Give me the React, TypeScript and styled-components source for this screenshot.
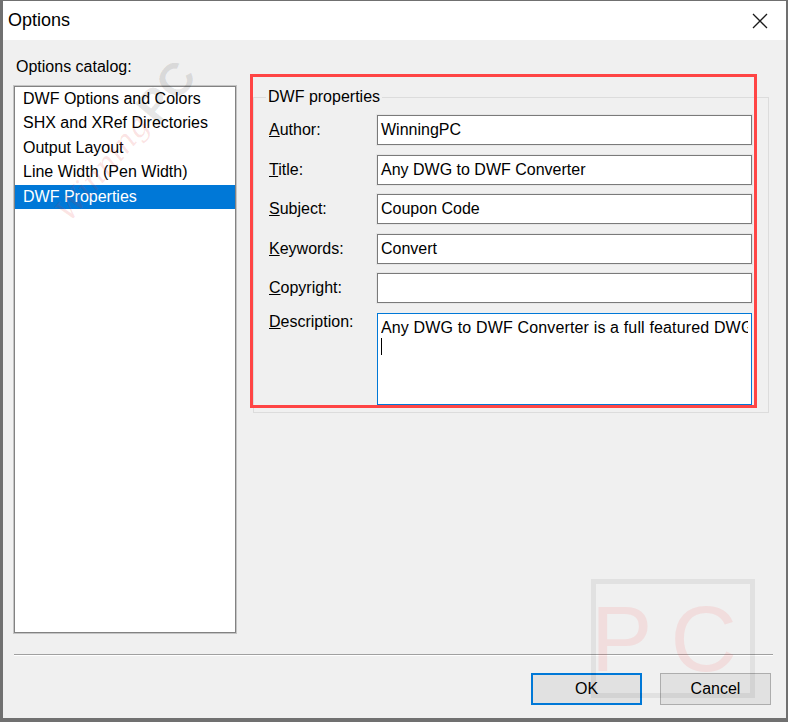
import styled, { createGlobalStyle } from 'styled-components';

const GlobalStyle = createGlobalStyle`
  html, body {
    margin: 0;
    padding: 0;
    background: #ffffff;
  }
  * {
    box-sizing: border-box;
  }
`;

const CATALOG_ITEMS = [
  'DWF Options and Colors',
  'SHX and XRef Directories',
  'Output Layout',
  'Line Width (Pen Width)',
  'DWF Properties',
];

const FIELDS = [
  { key: 'A', rest: 'uthor:', value: 'WinningPC' },
  { key: 'T', rest: 'itle:', value: 'Any DWG to DWF Converter' },
  { key: 'S', rest: 'ubject:', value: 'Coupon Code' },
  { key: 'K', rest: 'eywords:', value: 'Convert' },
  { key: 'C', rest: 'opyright:', value: '' },
];

const CloseIcon = () => (
  <svg width="16" height="16" viewBox="0 0 16 16" aria-hidden="true">
    <path d="M1 1 L15 15 M15 1 L1 15" stroke="#1a1a1a" strokeWidth="1.3" fill="none" />
  </svg>
);

const App = () => {
  return (
    <>
      <GlobalStyle />
      <Window>
        <TitleBar>
          <TitleText>Options</TitleText>
          <CloseButton type="button" aria-label="Close">
            <CloseIcon />
          </CloseButton>
        </TitleBar>

        <Client>
          <MainRow>
            <CatalogColumn>
              <CatalogLabel>Options catalog:</CatalogLabel>
              <CatalogList>
                {CATALOG_ITEMS.map((item, i) => (
                  <CatalogItem key={item} $selected={i === CATALOG_ITEMS.length - 1}>
                    {item}
                  </CatalogItem>
                ))}
              </CatalogList>
            </CatalogColumn>

            <PropertiesColumn>
              <GroupBox>
                <GroupLegend>DWF properties</GroupLegend>
                <FieldGrid>
                  {FIELDS.map((f) => (
                    <FieldRow key={f.key}>
                      <FieldLabel>
                        <u>{f.key}</u>
                        {f.rest}
                      </FieldLabel>
                      <TextBox>{f.value}</TextBox>
                    </FieldRow>
                  ))}
                  <FieldRow>
                    <FieldLabel $top>
                      <u>D</u>escription:
                    </FieldLabel>
                    <MemoBox>
                      <MemoLine>Any DWG to DWF Converter is a full featured DWG to DWF converter</MemoLine>
                      <Caret />
                    </MemoBox>
                  </FieldRow>
                </FieldGrid>
              </GroupBox>
            </PropertiesColumn>
          </MainRow>

          <Separator />

          <ButtonRow>
            <DialogButton type="button" $default>
              OK
            </DialogButton>
            <DialogButton type="button">Cancel</DialogButton>
          </ButtonRow>
        </Client>

        <Highlight />
        <ListWatermark>
          <WatermarkScript>Winning</WatermarkScript>
          <WatermarkPc>PC</WatermarkPc>
        </ListWatermark>
        <LogoWatermark>
          <LogoLetters>PC</LogoLetters>
        </LogoWatermark>
      </Window>
    </>
  );
};

const Window = styled.div`
  position: relative;
  width: 788px;
  height: 722px;
  display: flex;
  flex-direction: column;
  border-style: solid;
  border-color: #707070;
  border-width: 1px 2px 4px 3px;
  overflow: hidden;
  font-family: 'Liberation Sans', Arial, sans-serif;
  font-size: 16px;
  color: #000000;
`;

const TitleBar = styled.div`
  height: 39px;
  flex: none;
  display: flex;
  align-items: center;
  justify-content: space-between;
  padding: 0 14px 0 5px;
  background: #ffffff;
`;

const TitleText = styled.span`
  font-size: 18px;
  color: #000000;
`;

const CloseButton = styled.button`
  width: 24px;
  height: 24px;
  display: flex;
  align-items: center;
  justify-content: center;
  padding: 0;
  border: none;
  background: transparent;
`;

const Client = styled.div`
  flex: 1;
  display: flex;
  flex-direction: column;
  background: #f0f0f0;
  padding: 0 0 0 11px;
`;

const MainRow = styled.div`
  display: flex;
  align-items: flex-start;
`;

const CatalogColumn = styled.div`
  width: 222px;
  flex: none;
  display: flex;
  flex-direction: column;
  padding-top: 17px;
`;

const CatalogLabel = styled.div`
  height: 20px;
  line-height: 20px;
  padding-left: 2px;
  margin-bottom: 9px;
`;

const CatalogList = styled.ul`
  margin: 0;
  padding: 0;
  list-style: none;
  height: 547px;
  background: #ffffff;
  border: 1px solid #828282;
  box-shadow: 0 0 0 1px #c4c4c4;
`;

const CatalogItem = styled.li<{ $selected?: boolean }>`
  height: 24.4px;
  line-height: 24.4px;
  padding-left: 8px;
  white-space: nowrap;
  background: ${(p) => (p.$selected ? '#0078d7' : 'transparent')};
  color: ${(p) => (p.$selected ? '#ffffff' : '#000000')};
`;

const PropertiesColumn = styled.div`
  margin-left: 17px;
  width: 516px;
  flex: none;
  padding-top: 47px;
`;

const GroupBox = styled.fieldset`
  margin: 0;
  padding: 8px 16px 7px 15px;
  border: 1px solid #dcdcdc;
  min-width: 0;
`;

const GroupLegend = styled.legend`
  height: 20px;
  line-height: 20px;
  padding: 0 2px;
  margin-left: -3px;
`;

const FieldGrid = styled.div`
  display: flex;
  flex-direction: column;
  gap: 9.6px;
`;

const FieldRow = styled.div`
  display: grid;
  grid-template-columns: 108px 1fr;
  align-items: start;
`;

const FieldLabel = styled.label<{ $top?: boolean }>`
  line-height: ${(p) => (p.$top ? '18px' : '30px')};
  white-space: nowrap;
`;

const TextBox = styled.div`
  height: 30px;
  line-height: 28px;
  padding: 0 3px;
  background: #ffffff;
  border: 1px solid #7a7a7a;
  box-shadow: 0 0 0 1px #e6e6e6;
  white-space: nowrap;
  overflow: hidden;
`;

const MemoBox = styled.div`
  height: 92px;
  padding: 4px 3px;
  background: #ffffff;
  border: 1px solid #0078d7;
  overflow: hidden;
`;

const MemoLine = styled.div`
  line-height: 20px;
  white-space: nowrap;
  overflow: hidden;
  letter-spacing: 0.15px;
`;

const Caret = styled.div`
  width: 1px;
  height: 17px;
  background: #000000;
`;

const Separator = styled.div`
  margin: 21px 13px 0 0;
  height: 2px;
  border-top: 1px solid #a0a0a0;
  border-bottom: 1px solid #ffffff;
`;

const ButtonRow = styled.div`
  display: flex;
  justify-content: flex-end;
  gap: 18px;
  padding: 17px 15px 0 0;
`;

const DialogButton = styled.button<{ $default?: boolean }>`
  width: 111px;
  height: 32px;
  padding: 0;
  font-family: inherit;
  font-size: 16px;
  color: #000000;
  background: #e1e1e1;
  border: ${(p) => (p.$default ? '2px solid #0078d7' : '1px solid #adadad')};
`;

const Highlight = styled.div`
  position: absolute;
  left: 247px;
  top: 73px;
  width: 507px;
  height: 334px;
  border: 3px solid #ff4545;
  pointer-events: none;
`;

const ListWatermark = styled.div`
  position: absolute;
  left: 58px;
  top: 190px;
  height: 50px;
  display: flex;
  align-items: center;
  transform-origin: 0 50%;
  transform: rotate(-50deg);
  pointer-events: none;
  white-space: nowrap;
`;

const WatermarkScript = styled.span`
  font-family: 'DejaVu Serif', serif;
  font-style: italic;
  font-size: 30px;
  color: rgba(230, 40, 40, 0.13);
`;

const WatermarkPc = styled.span`
  font-size: 46px;
  font-weight: 700;
  margin-left: 4px;
  color: rgba(0, 0, 0, 0.1);
`;

const LogoWatermark = styled.div`
  position: absolute;
  left: 588px;
  top: 578px;
  width: 164px;
  height: 119px;
  border: 5px solid rgba(0, 0, 0, 0.06);
  display: flex;
  align-items: center;
  justify-content: center;
  pointer-events: none;
`;

const LogoLetters = styled.span`
  font-size: 92px;
  letter-spacing: 18px;
  color: rgba(255, 60, 60, 0.1);
  line-height: 1;
`;

export default App;
